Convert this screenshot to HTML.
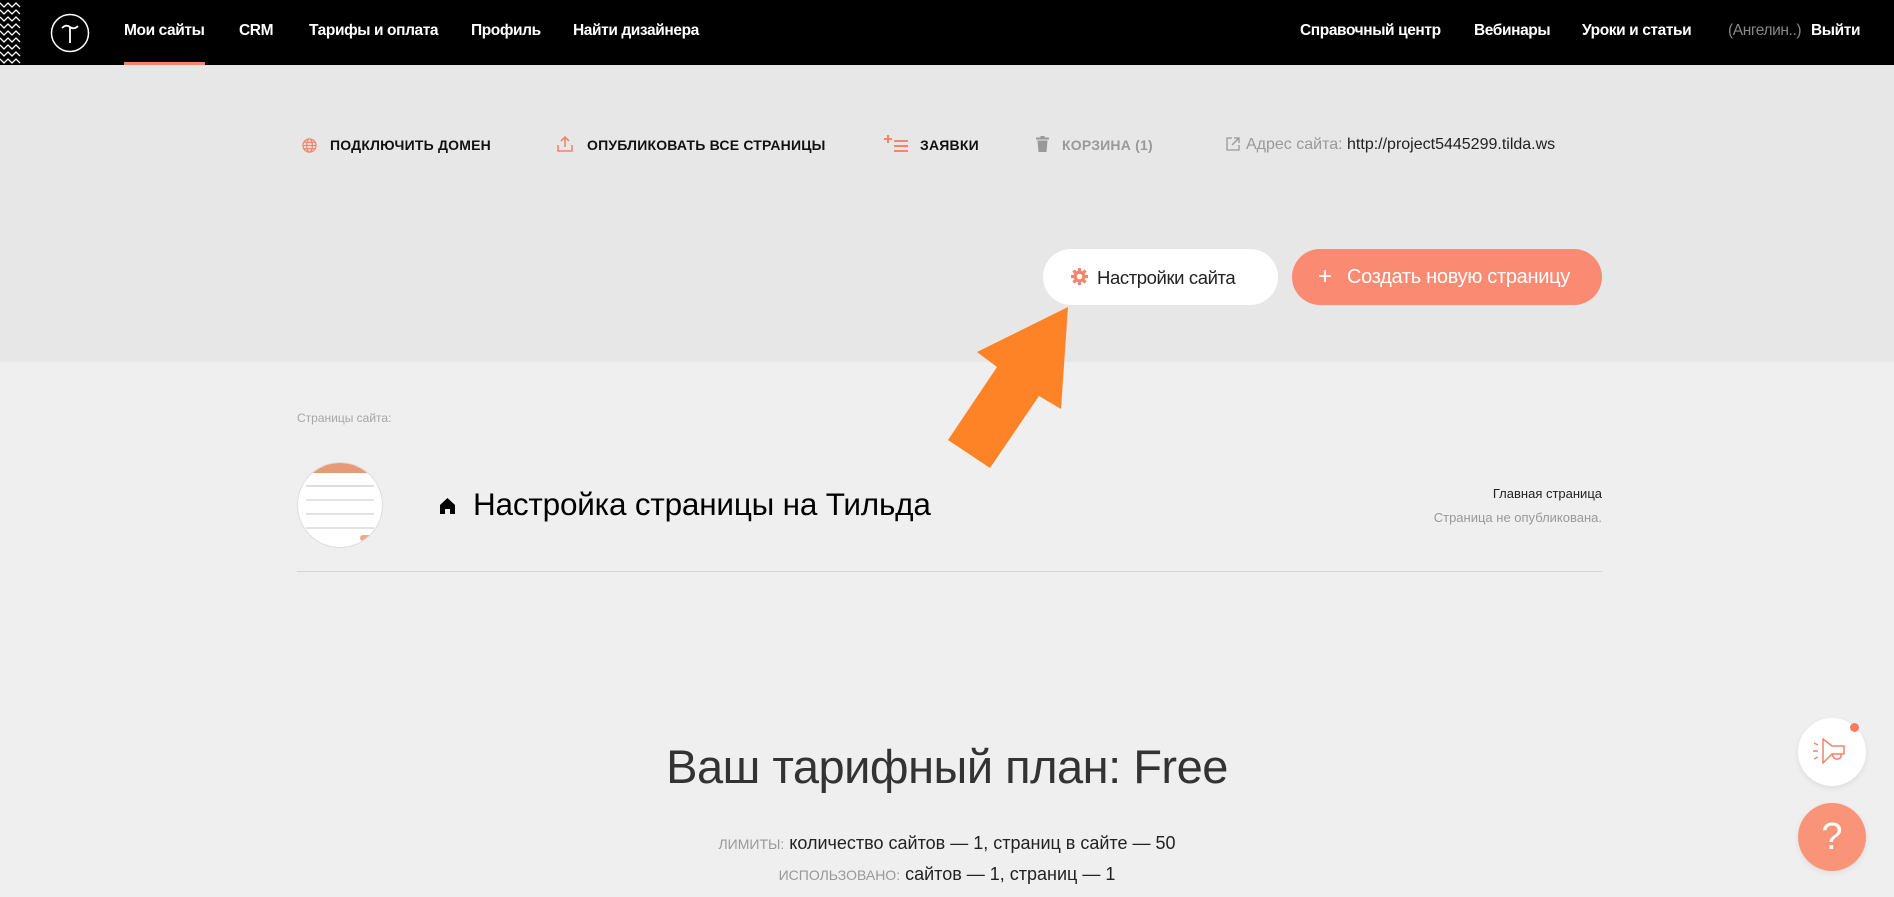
<!DOCTYPE html>
<html><head><meta charset="utf-8">
<style>
*{margin:0;padding:0;box-sizing:border-box}
body{width:1894px;height:897px;overflow:hidden;background:#efefef;font-family:"Liberation Sans",sans-serif;position:relative}
.a{position:absolute;white-space:nowrap}
.nav{position:absolute;left:0;top:0;width:1894px;height:65px;background:#000}
.nav .a{color:#fff;font-weight:bold;font-size:15.5px;top:22px;letter-spacing:-0.4px}
.top{position:absolute;left:0;top:65px;width:1894px;height:297px;background:#e7e7e7}
.tb{font-size:14px;font-weight:bold;top:137px;color:#111;letter-spacing:0.2px}
</style></head><body>
<div class="nav">
<svg class="a" style="left:0;top:0" width="22" height="65" viewBox="0 0 22 65">
<g fill="none" stroke="#fff" stroke-width="1.3">
<path d="M0 3 l4 4 l4 -4 l4 4 l4 -4 l4 4"/><path d="M0 10 l4 4 l4 -4 l4 4 l4 -4 l4 4"/><path d="M0 17 l4 4 l4 -4 l4 4 l4 -4 l4 4"/><path d="M0 24 l4 4 l4 -4 l4 4 l4 -4 l4 4"/><path d="M0 31 l4 4 l4 -4 l4 4 l4 -4 l4 4"/><path d="M0 38 l4 4 l4 -4 l4 4 l4 -4 l4 4"/><path d="M0 45 l4 4 l4 -4 l4 4 l4 -4 l4 4"/><path d="M0 52 l4 4 l4 -4 l4 4 l4 -4 l4 4"/><path d="M0 59 l4 4 l4 -4 l4 4 l4 -4 l4 4"/>
</g></svg>
<svg class="a" style="left:50px;top:13px" width="40" height="40" viewBox="0 0 40 40"><circle cx="20" cy="20" r="18.5" fill="none" stroke="#fff" stroke-width="1.5"/><path d="M12 15 q4 -4 8 -1 q4 3 8 -1 M20 14 V30" fill="none" stroke="#fff" stroke-width="1.8"/></svg>
<div class="a" style="left:124px">Мои сайты</div>
<div class="a" style="left:124px;top:62px;width:81px;height:3px;background:#f4846a"></div>
<div class="a" style="left:239px">CRM</div>
<div class="a" style="left:309px">Тарифы и оплата</div>
<div class="a" style="left:471px">Профиль</div>
<div class="a" style="left:573px">Найти дизайнера</div>
<div class="a" style="left:1300px">Справочный центр</div>
<div class="a" style="left:1474px">Вебинары</div>
<div class="a" style="left:1582px">Уроки и статьи</div>
<div class="a" style="left:1728px;color:#888;font-weight:normal">(Ангелин..)</div>
<div class="a" style="left:1811px">Выйти</div>
</div>
<div class="top"></div>
<svg class="a" style="left:302px;top:138px" width="15" height="15" viewBox="0 0 16 16"><g fill="none" stroke="#f4846a" stroke-width="1.3"><circle cx="8" cy="8" r="7"/><ellipse cx="8" cy="8" rx="3" ry="7"/><path d="M1 8h14M2 4.5h12M2 11.5h12"/></g></svg>
<div class="a tb" style="left:330px">ПОДКЛЮЧИТЬ ДОМЕН</div>
<svg class="a" style="left:556px;top:135px" width="18" height="18" viewBox="0 0 18 18"><g fill="none" stroke="#f4846a" stroke-width="1.6"><path d="M9 12V2M5 6l4-4 4 4M2 10v6h14v-6"/></g></svg>
<div class="a tb" style="left:587px">ОПУБЛИКОВАТЬ ВСЕ СТРАНИЦЫ</div>
<svg class="a" style="left:884px;top:135px" width="24" height="18" viewBox="0 0 24 18"><g stroke="#f4846a" stroke-width="2"><path d="M0 4h8M4 0v8M10 6h14M10 11h14M10 16h14"/></g></svg>
<div class="a tb" style="left:920px">ЗАЯВКИ</div>
<svg class="a" style="left:1036px;top:136px" width="13" height="16" viewBox="0 0 13 16"><g fill="#999"><rect x="0" y="1.5" width="13" height="2"/><rect x="4.5" y="0" width="4" height="2"/><path d="M1.5 4.5h10l-1 11.5h-8z"/></g></svg>
<div class="a tb" style="left:1062px;color:#999">КОРЗИНА (1)</div>
<svg class="a" style="left:1226px;top:137px" width="14" height="14" viewBox="0 0 14 14"><g fill="none" stroke="#999" stroke-width="1.3"><path d="M6 1H1v12h12V8M8 1h5v5M13 1L6 8"/></g></svg>
<div class="a" style="left:1246px;top:136px;font-size:16px;color:#999">Адрес сайта: <span style="color:#222">http://project5445299.tilda.ws</span></div>
<div class="a" style="left:1043px;top:249px;width:235px;height:56px;background:#fff;border-radius:28px"></div>
<svg class="a" style="left:1071px;top:268px" width="17" height="17" viewBox="0 0 16 16"><g fill="#f4846a"><circle cx="8" cy="8" r="5.5"/><g stroke="#f4846a" stroke-width="3"><path d="M8 0v16M0 8h16M2.3 2.3l11.4 11.4M13.7 2.3L2.3 13.7"/></g></g><circle cx="8" cy="8" r="2.6" fill="#fff"/></svg>
<div class="a" style="left:1097px;top:267px;font-size:18.5px;color:#222;letter-spacing:-0.4px">Настройки сайта</div>
<div class="a" style="left:1292px;top:249px;width:310px;height:56px;background:#fa8b72;border-radius:28px"></div>
<div class="a" style="left:1318px;top:263px;font-size:24px;color:#fff">+</div>
<div class="a" style="left:1347px;top:266px;font-size:20px;color:#fff;letter-spacing:-0.3px">Создать новую страницу</div>
<svg class="a" style="left:0;top:0" width="1894" height="897"><polygon points="1068,307 977,352 997,367 948,440 990,468 1039,396 1061,409" fill="#fd8326"/></svg>
<div class="a" style="left:297px;top:411px;font-size:12px;color:#a6a6a6">Страницы сайта:</div>
<div class="a" style="left:297px;top:462px;width:86px;height:86px;border-radius:50%;background:#fff;overflow:hidden;border:1px solid #ddd">
<div style="height:10px;background:#e59a78"></div>
<div style="margin:12px 8px 0;height:2px;background:#ddd"></div>
<div style="margin:12px 8px 0;height:2px;background:#e3e3e3"></div>
<div style="margin:12px 8px 0;height:2px;background:#e3e3e3"></div>
<div style="margin:12px 8px 0;height:2px;background:#e3e3e3"></div>
<div style="position:absolute;right:4px;bottom:6px;width:18px;height:6px;background:#f4a58c;border-radius:3px"></div>
</div>
<svg class="a" style="left:440px;top:498px" width="15" height="16" viewBox="0 0 15 16"><path d="M7.5 0L15 7v9H10v-5H5v5H0V7z" fill="#000"/></svg>
<div class="a" style="left:473px;top:486px;font-size:31.5px;color:#000;letter-spacing:-0.2px">Настройка страницы на Тильда</div>
<div class="a" style="right:292px;top:486px;font-size:13px;color:#222">Главная страница</div>
<div class="a" style="right:292px;top:510px;font-size:13px;color:#999">Страница не опубликована.</div>
<div class="a" style="left:297px;top:571px;width:1305px;height:1px;background:#d4d4d4"></div>
<div class="a" style="left:0;width:1894px;text-align:center;top:739px;font-size:47px;color:#333;letter-spacing:-0.5px">Ваш тарифный план: Free</div>
<div class="a" style="left:0;width:1894px;text-align:center;top:833px;font-size:18px;color:#222"><span style="font-size:14px;color:#999">ЛИМИТЫ:</span> количество сайтов — 1, страниц в сайте — 50</div>
<div class="a" style="left:0;width:1894px;text-align:center;top:864px;font-size:18px;color:#222"><span style="font-size:14px;color:#999">ИСПОЛЬЗОВАНО:</span> сайтов — 1, страниц — 1</div>
<div class="a" style="left:1798px;top:718px;width:68px;height:68px;border-radius:50%;background:#fff;box-shadow:0 2px 6px rgba(0,0,0,.08)"></div>
<svg class="a" style="left:1812px;top:736px" width="40" height="30" viewBox="0 0 40 30"><g fill="none" stroke="#f4846a" stroke-width="1.5"><path d="M11 3v24l9-9h12V10H20z"/><path d="M20 18q2 6 6 5q4-1 3-5"/><path d="M2 7l4 2M1 15h5M2 23l4-2"/></g></svg>
<div class="a" style="left:1850px;top:723px;width:9px;height:9px;border-radius:50%;background:#fa7b5e"></div>
<div class="a" style="left:1798px;top:803px;width:68px;height:68px;border-radius:50%;background:#fa9479;box-shadow:0 2px 6px rgba(0,0,0,.08);color:#fff;font-size:38px;text-align:center;line-height:68px;font-weight:300">?</div>
</body></html>
